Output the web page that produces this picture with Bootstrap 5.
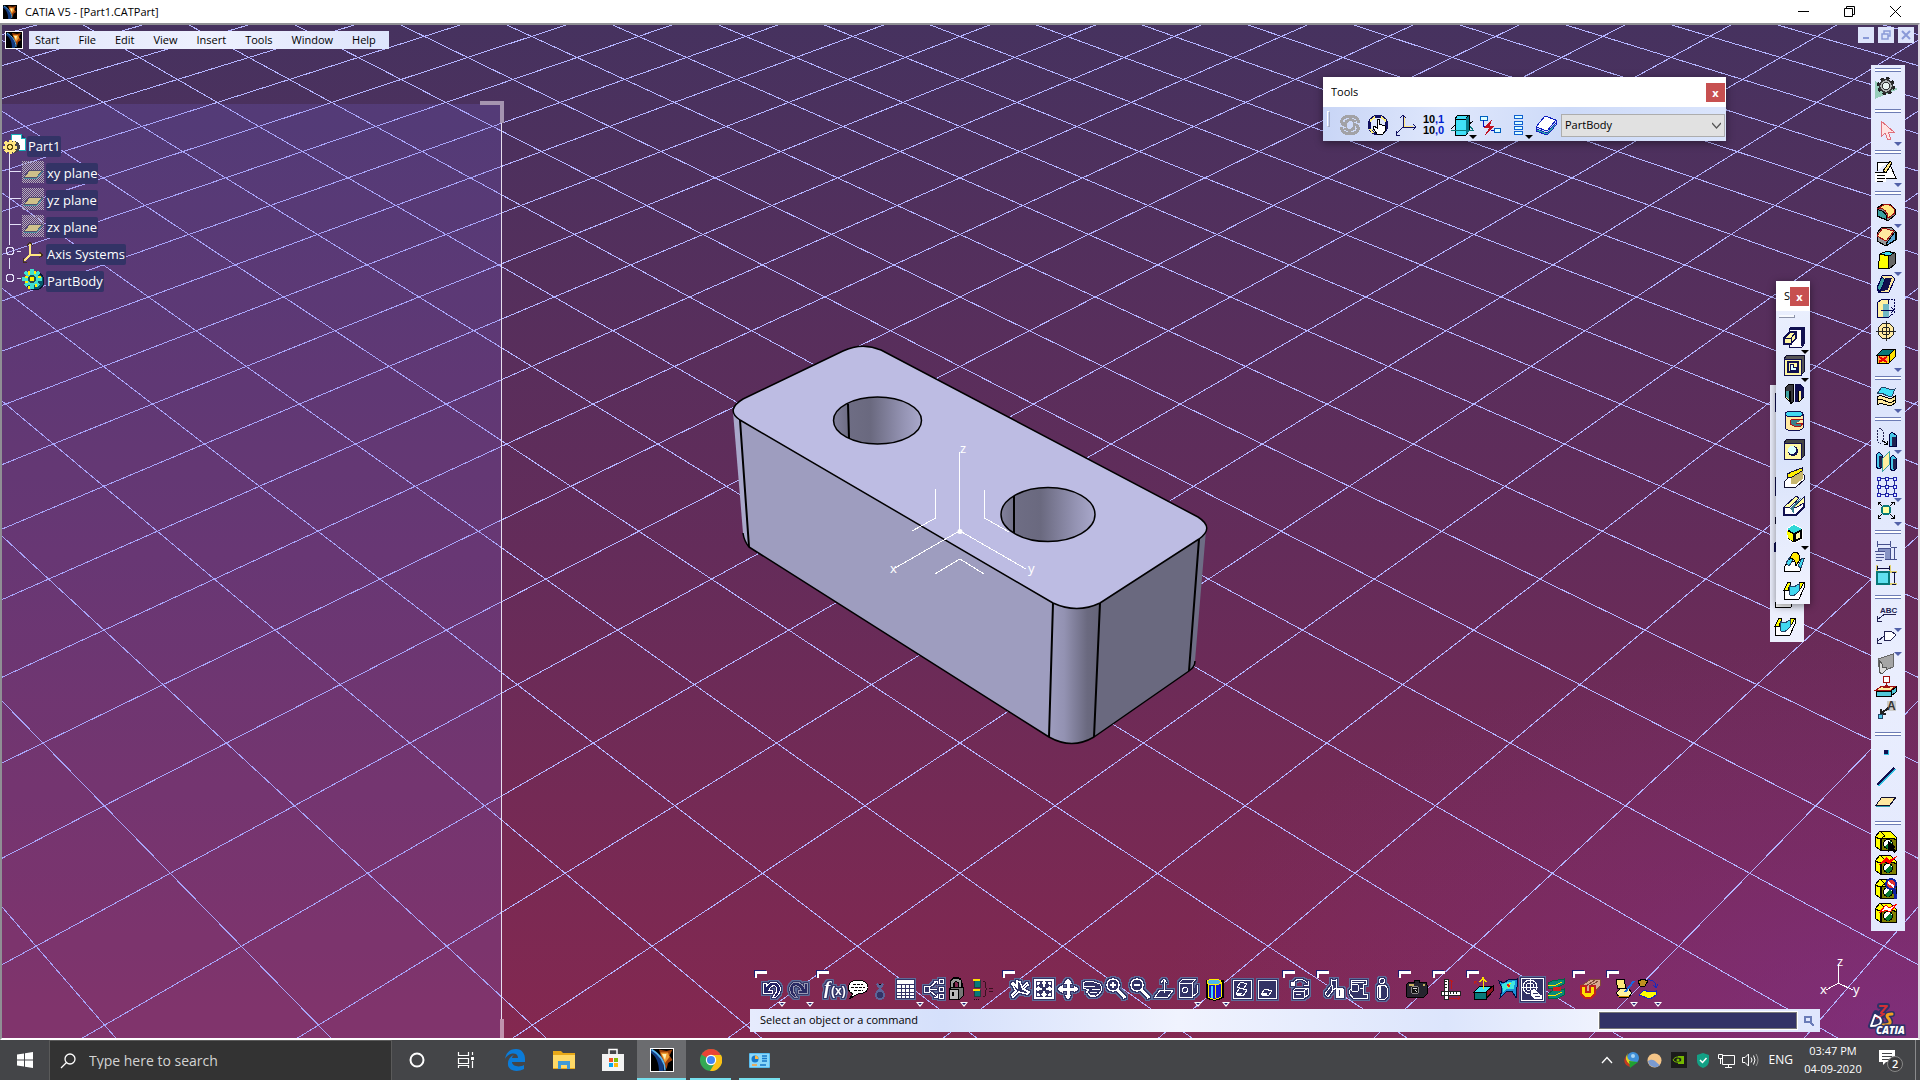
<!DOCTYPE html>
<html lang="en">
<head>
<meta charset="utf-8">
<meta name="viewport" content="width=device-width, initial-scale=1">
<title>CATIA V5 - [Part1.CATPart]</title>
<link href="https://cdn.jsdelivr.net/npm/bootstrap@5.3.0/dist/css/bootstrap.min.css" rel="stylesheet">
<style>
  :root { --pale: #e6ebfd; --navy: #333366; }
  body { font-family: "Open Sans", "Noto Sans", sans-serif; font-size: 11px; line-height: 16px; color: #000; background: #fff; overflow: hidden; }
  svg { display: block; flex: none; }
  .ico { width: 24px; height: 24px; shape-rendering: crispEdges; }
  .tool { background: none; border: 0; padding: 0; display: flex; align-items: center; justify-content: center; position: relative; flex: none; }
  .titlebar { height: 23px; padding: 0 2px 0 3px; }
  .titlebar .tool { width: 46px; height: 22px; }
  .stage { background: linear-gradient(180deg, #46325f 0%, #642c5a 52%, #842850 100%); isolation: isolate; }
  .stage::after { content: ""; position: absolute; inset: 0; border: 2px solid #8f8f94; border-right-color: #dcd8e0; border-bottom-color: #fff; pointer-events: none; }
  .scene { position: absolute; inset: 0; width: 100%; height: 100%; z-index: -1; }
  .menurow { padding: 8px 6px 0; }
  .docicon { outline: 1px solid #fff; }
  .menustrip { background: linear-gradient(90deg, #e2e7fb, #eef1fe, #dde4fc); height: 18px; padding-left: 6px; margin-left: 7px; }
  .menustrip a { color: #000; text-decoration: none; margin-right: 19px; line-height: 18px; }
  .menustrip a:last-child { margin-right: 13px; }
  .specs { width: 502px; margin-top: 55px; background: rgba(122,100,220,.2); position: relative; border-right: 1px solid #e8e0ee; padding-top: 29px; }
  .specs::before { content: ""; position: absolute; right: -3px; top: -3px; width: 24px; height: 22px; border-top: 4px solid #a594b0; border-right: 4px solid #a594b0; }
  .specs::after { content: ""; position: absolute; right: -3px; bottom: 0; width: 4px; height: 21px; background: #c093ad; }
  .tree li { height: 27px; padding-left: 21px; display: flex; align-items: flex-start; }
  .tree li.top { padding-left: 2px; }
  .tree .chip { background: var(--navy); color: #fff; font-size: 13px; line-height: 21px; padding: 0 1px; border-radius: 2px; margin-top: 3px; white-space: nowrap; text-decoration: none; }
  .tree .ico { margin-right: 1px; }
  .tree-lines { position: absolute; left: 0; top: 29px; z-index: -1; }
  .mdi { position: absolute; right: 6px; top: 4px; gap: 4px; }
  .mdi .tool { width: 16px; height: 16px; background: #dde4fb; }
  .pal { position: absolute; background: var(--pale); box-shadow: 0 2px 8px rgba(0,0,0,.45); }
  .pal-head { background: #fff; height: 30px; padding: 0 1px 0 8px; }
  .pal-head span { min-width: 0; overflow: hidden; }
  .closer { width: 19px; height: 19px; background: #c75050; color: #fff; font-weight: 700; line-height: 11px; }
  .pal-tools { right: 194px; top: 54px; width: 403px; }
  .pal-body { height: 34px; padding: 2px 1px 0 13px; background: linear-gradient(100deg, #c8d5f6, #dfe7fc 30%, #cddaf8 60%, #dbe5fc); }
  .pal-body .tool { width: 28px; height: 28px; }
  .grip { width: 3px; height: 16px; border: 1px solid #a5adc4; border-left-color: #fff; border-top-color: #fff; position: absolute; left: 4px; top: 34px; }
  .bodysel { width: 164px; height: 23px; line-height: 16px; border: 1px solid #adadad; border-radius: 0; background-color: #e1e1e1; padding: 0 3px; appearance: none; color: #000; }
  .selwrap { position: relative; margin-left: 1px; }
  .selwrap svg { position: absolute; right: 4px; top: 8px; pointer-events: none; }
  .more::after { content: ""; position: absolute; right: -1px; bottom: 0; border: 4px solid transparent; border-top-color: #000; border-bottom: 0; }
  .pal-s { right: 110px; top: 258px; width: 34px; background: linear-gradient(180deg, #edf1fe, #d9e3fb 55%, #f1f3fe); }
  .pal-back { right: 116px; top: 362px; width: 34px; padding: 3px 0 2px; background: #eceffd; box-shadow: none; }
  .pal-s .tool:not(.closer), .pal-back .tool { width: 34px; height: 28px; padding-left: 2px; }
  .pal-back .tool { padding: 0 4px 0 0; }
  .pal-s .more::after { right: 1px; bottom: -2px; }
  .sgrip { height: 13px; padding: 4px 15px 0 3px; }
  .sgrip div { height: 3px; border-bottom: 1px solid #8c93aa; border-right: 1px solid #8c93aa; background: #f8faff; }
  .rail { position: absolute; right: 15px; top: 42px; width: 34px; background: linear-gradient(180deg, #e6ebfe, #dde5fc 40%, #eaeefe 70%, #e2e8fd); }
  .rail-group { padding: 3px 4px 5px 3px; }
  .rail-group::before { content: ""; display: block; height: 4px; margin: 0 0 5px 1px; border-top: 1px solid #6d7cb5; border-bottom: 1px solid #6d7cb5; background: #fff; }
  .rail .tool { width: 24px; height: 24px; }
  .rail .more::after { right: -4px; bottom: -4px; border-width: 4px; border-top-color: #5261a8; border-bottom: 0; z-index: 1; }
  .dock { position: absolute; left: 755px; bottom: 32px; height: 37px; }
  .dock-group { position: relative; padding: 5px 5px 0; height: 37px; }
  .dock-group::before { content: ""; position: absolute; left: 0; top: 0; width: 12px; height: 7px; border-top: 3px solid #fff; border-left: 2px solid #fff; box-shadow: -1px -1px 0 #1c1c70; }
  .dock .tool { width: 24px; height: 25px; }
  .dock .w20 { width: 20px; } .dock .w22 { width: 22px; } .dock .w28 { width: 28px; } .dock .w32 { width: 32px; }
  .dock .more::after { right: -2px; bottom: -6px; border: 4px solid transparent; border-top: 5px solid #fff; border-bottom: 0; }
  .dock .more::before { content: ""; position: absolute; right: 0; bottom: -4px; border: 2px solid transparent; border-top-color: #1c1c70; border-bottom: 0; z-index: 1; }
  .halo { filter: drop-shadow(1px 0 0 #333366) drop-shadow(-1px 0 0 #333366) drop-shadow(0 1px 0 #333366) drop-shadow(0 -1px 0 #333366) drop-shadow(1px 0 0 #5c6c98) drop-shadow(-1px 0 0 #5c6c98) drop-shadow(0 1px 0 #5c6c98) drop-shadow(0 -1px 0 #5c6c98); }
  .statusline { position: absolute; left: 750px; right: 100px; bottom: 8px; height: 23px; padding-left: 10px; background: linear-gradient(90deg, #e6ebfd, #d5e0fb 18%, #f0f3fe 40%, #dce5fc 65%, #f0f3fe 80%, #dfe6fd); }
  .statusline label { padding-bottom: 2px; }
  .powerin { width: 200px; height: 19px; background: var(--navy); border: 2px solid #777; border-radius: 0; outline: 1px solid #fff; outline-offset: -1px; color: #fff; padding: 0 3px; }
  .statusline .tool { width: 22px; height: 20px; }
  .taskbar { height: 40px; background: #444548; color: #fff; }
  .taskbar .tool { width: 49px; height: 40px; color: #fff; }
  .taskbar .tool.open::after { content: ""; position: absolute; left: 4px; right: 4px; bottom: 0; height: 2px; background: #76e0ee; }
  .taskbar .tool.active { background: #6b6c6f; }
  .taskbar .tool.active::after { left: 0; right: 0; }
  .findbox { width: 343px; height: 40px; background: #333; border: 1px solid #5a5a5a; border-bottom: 0; padding-left: 9px; }
  .findbox input { background: none; border: 0; color: #fff; font-size: 14px; width: 280px; padding: 0; outline: 0; }
  .findbox input::placeholder { color: #d4d4d4; opacity: 1; }
  .taskbar .tray { margin-left: auto; }
  .taskbar .tray .tool { width: 24px; }
  .lang { font-size: 12px; margin: 0 10px 0 6px; }
  .clock { width: 60px; text-align: center; line-height: 18px; }
  .taskbar .tray .notes { width: 26px; margin-right: 10px; }
  .deskpeek { width: 5px; border-left: 1px solid #8a8a8c; }
</style>
<script src="https://cdn.jsdelivr.net/npm/bootstrap@5.3.0/dist/js/bootstrap.bundle.min.js"></script>
</head>
<body class="d-flex flex-column vh-100">

<svg width="0" height="0" class="position-absolute" aria-hidden="true">
  <defs>
    <symbol id="logo" viewBox="0 0 16 16"><rect width="16" height="16" fill="#000"/><path d="M6 1L11 2L15 1L13 5L15 8L12 10L11 14L8 8Z" fill="#a04208"/><path d="M7 3L12 3L13 6L10 10Z" fill="#f09a30"/><path d="M8 4L11 4L10 8Z" fill="#fff0b0"/><path d="M1 1C6 4 10 9 9 16L6 16C6 10 4 5 0 3Z" fill="#123a80"/><path d="M1 1C6 4 10 9 10 15" fill="none" stroke="#58b4f0"/></symbol>
    <symbol id="partdoc" viewBox="0 0 24 24"><path d="M9 1H19L23 5V17H9Z" fill="#fff" stroke="#18b0b8"/><path d="M19 1V5H23" fill="#333366" stroke="#18b0b8"/><circle cx="12" cy="14" r="6" fill="#44444c"/><g transform="translate(8 14)"><path d="M0-7V7M-7 0H7M-5-5L5 5M-5 5L5-5" stroke="#ffe680" stroke-width="3"/><circle r="5" fill="#ffe680"/><circle r="2.500" fill="#ffe680" stroke="#5c4a10" stroke-width="1.500"/></g></symbol>
    <pattern id="mesh" width="2" height="2" patternUnits="userSpaceOnUse"><rect width="1" height="1" fill="#b5adb8"/><rect x="1" y="1" width="1" height="1" fill="#b5adb8"/></pattern>
    <symbol id="planeh" viewBox="0 0 24 24"><rect x="1" y="1" width="22" height="22" fill="url(#mesh)"/><path d="M9 10H22L16 17H3Z" fill="#cfc08a" stroke="#555070"/><path d="M3 18H16L22 11" fill="none" stroke="#4c8fa0"/></symbol>
    <symbol id="axisy" viewBox="0 0 24 24"><path d="M9 3V14H20M9 14L3 20" fill="none" stroke="#ffe680" stroke-width="2"/><path d="M6 5L9 1L12 5M18 11L22 14L18 17M2 17V21H6" fill="none" stroke="#44301c"/></symbol>
    <symbol id="bodygear" viewBox="0 0 24 24"><circle cx="14" cy="13" r="9" fill="#06586a" stroke="#041830"/><path d="M11 1V21M1 11H21M4 4L18 18M18 4L4 18" stroke="#3fe0d0" stroke-width="4"/><circle cx="11" cy="11" r="6.500" fill="#3fe0d0"/><path d="M8 3V7M14 3V6M4 9H7M4 14H7M8 18V21M15 16V19M17 9H20" stroke="#fff000" stroke-width="2"/><circle cx="11" cy="11" r="3" fill="#fff000" stroke="#205050" stroke-width="1.500"/></symbol>
    <symbol id="gear" viewBox="0 0 24 24"><path d="M1 4L24 12L1 22Z" fill="#97cdb9"/><circle cx="12" cy="9" r="7.500" fill="none" stroke="#222" stroke-width="3" stroke-dasharray="3.400 2.490"/><circle cx="12" cy="9" r="5" fill="#e8f2f0" stroke="#333" stroke-width="4"/><circle cx="12" cy="9" r="5" fill="none" stroke="#b0b4b4" stroke-width="1.500"/></symbol>
    <symbol id="ptr" viewBox="0 0 24 24"><path d="M7 3V19L11 15L14 22L17 21L14 14H20Z" fill="#ffe3e3" stroke="#e0707c"/></symbol>
    <symbol id="sketch" viewBox="0 0 24 24"><path d="M3 12V3H14M12 19H22L16 6L12 14" fill="#fff" stroke="#000"/><path d="M9 12L16 2L18 4L12 14Z" fill="#ffe680" stroke="#000"/><path d="M1 13H12V23H1Z" fill="#fff"/><path d="M1 13.500H12M3 16.500H11M3 19.500H11M3 22.500H9" stroke="#000"/></symbol>
    <symbol id="fillet" viewBox="0 0 24 24"><path d="M3 8L9 4H16L21 9V15L14 21L3 16Z" fill="#888" stroke="#000"/><path d="M3 10C7 9 13 13 13 20L3 16Z" fill="#3aa0a0" stroke="#000"/><path d="M5 8L11 4C17 4 21 8 21 13L14 18C14 12 10 8 5 8Z" fill="#ffe680" stroke="#a01010"/></symbol>
    <symbol id="chamfer" viewBox="0 0 24 24"><path d="M3 9L8 3L18 4L22 8V16L12 22L3 17Z" fill="#999" stroke="#000"/><path d="M12 20L21 8V16L12 22Z" fill="#5aa8d8" stroke="#000"/><path d="M3 12L9 4L20 7L12 17Z" fill="#ffe9a0" stroke="#a01010"/></symbol>
    <symbol id="draft" viewBox="0 0 24 24"><path d="M6 6L13 3L21 5V16L15 21L4 20Z" fill="#666" stroke="#000"/><path d="M6 6L13 3L20 5L15 8Z" fill="#40d8ee" stroke="#000"/><path d="M6 6L15 8L14 21L4 20Z" fill="#ffff00" stroke="#000"/></symbol>
    <symbol id="shell" viewBox="0 0 24 24"><path d="M8 4L17 3L21 7L15 20L5 21L3 16Z" fill="#ffe9a0" stroke="#000050"/><path d="M11 6L18 6L14 18L7 19Z" fill="#10104c"/><path d="M3 16L8 5L11 8L6 20Z" fill="#3aa0a0" stroke="#000050"/></symbol>
    <symbol id="thick" viewBox="0 0 24 24"><path d="M3 7L8 3H14V21H3Z" fill="#fff0a0" stroke="#000050"/><path d="M9 8V21M14 3L20 3V17L15 21" fill="none" stroke="#000050" stroke-dasharray="2 1"/><path d="M9 8H15V21H9Z" fill="#70b8c4"/><path d="M7 14H20M17 11L20 14L17 17" fill="none" stroke="#000050"/></symbol>
    <symbol id="target" viewBox="0 0 24 24"><circle cx="12" cy="11" r="8" fill="#ffeaa0" stroke="#222"/><circle cx="12" cy="11" r="4" fill="none" stroke="#222"/><path d="M12.500 1V21M2 11.500H22" stroke="#222"/></symbol>
    <symbol id="replace" viewBox="0 0 24 24"><path d="M3 11L9 5H21V13L15 19H3Z" fill="#ffe000" stroke="#000"/><path d="M3 11L9 5H21L15 11Z" fill="#087878" stroke="#000"/><path d="M4 12H14V18H4Z" fill="#ffb040"/><path d="M5 13L13 18M13 13L5 18" stroke="#e00" stroke-width="2"/><path d="M15 11V19" stroke="#000"/></symbol>
    <symbol id="surf" viewBox="0 0 24 24"><path d="M3 12C9 7 14 18 21 11V18C14 25 9 15 3 20Z" fill="#ffe9a0" stroke="#000"/><path d="M3 15C9 11 14 22 21 15" fill="none" stroke="#000"/><path d="M3 9L7 3C12 0 15 7 21 4L18 11C13 14 9 5 3 9Z" fill="#40e0f8" stroke="#246"/></symbol>
    <symbol id="trans" viewBox="0 0 24 24"><path d="M3 5L6 2L9 5V15L6 18L3 15Z" fill="none" stroke="#222250" stroke-dasharray="2 1"/><path d="M8 14L13 18M13 15V18H10" fill="none" stroke="#000"/><path d="M15 9L18 6L22 9V20H15Z" fill="#48c8e8" stroke="#000040"/><path d="M18 11H22V20H18Z" fill="#222250"/></symbol>
    <symbol id="mirror" viewBox="0 0 24 24"><path d="M2 5L5 2L8 5V17L5 19L2 17ZM16 8L19 5L22 8V19L19 21L16 19Z" fill="#48c8e8" stroke="#000040"/><path d="M5 6H8V17H5ZM19 9H22V19H19Z" fill="#222250"/><path d="M8 9L15 2V15L8 22Z" fill="#fff0a0" stroke="#3aa0a0"/></symbol>
    <symbol id="pattern" viewBox="0 0 24 24"><path d="M4.500 4.500H20.500V20.500H4.500ZM4.500 12.500H20.500M12.500 4.500V20.500" fill="none" stroke="#223090"/><path d="M3 3h3v3h-3zM11 3h3v3h-3zM19 3h3v3h-3zM3 11h3v3h-3zM11 11h3v3h-3zM19 11h3v3h-3zM3 19h3v3h-3zM11 19h3v3h-3zM19 19h3v3h-3z" fill="#e0f0ff" stroke="#2020b0"/></symbol>
    <symbol id="scale" viewBox="0 0 24 24"><circle cx="12" cy="12" r="4.500" fill="#ffffa0" stroke="#087878" stroke-width="2"/><path d="M8 8L4 4M16 8L20 4M8 16L4 20M16 16L20 20M4 7V4H7M17 4H20V7M4 17V20H7M20 17V20H17" fill="none" stroke="#000"/></symbol>
    <symbol id="cons1" viewBox="0 0 24 24"><path d="M3.500 2V8M16.500 2V8M3 5.500H16M17 8.500H23M17 20.500H23M20.500 8V20" stroke="#46508c"/><path d="M4 9H16V20H4Z" fill="#8794c4" stroke="#46508c"/><path d="M1 12H11V22H1Z" fill="#dce3fa"/><path d="M1 12.500H11M2 15.500H10M2 18.500H10M2 21.500H8" stroke="#46508c"/></symbol>
    <symbol id="cons2" viewBox="0 0 24 24"><path d="M16 9H23M16 21H23M3 2V8M16 2V8" stroke="#e0d070" stroke-width="2"/><path d="M4 5.500H15M20.500 10V20M3.500 3V7M15.500 3V7M18 9.500H22M18 21.500H22" stroke="#101040"/><path d="M3 9H15V21H3Z" fill="#60e0f0" stroke="#087878" stroke-width="1.500"/></symbol>
    <symbol id="flag" viewBox="0 0 24 24"><path d="M10 3H17L22 7L17 12H10Z" fill="#fff" stroke="#222250"/><path d="M10 8L3 14M3 10V15H8" fill="none" stroke="#222250"/></symbol>
    <symbol id="greyp" viewBox="0 0 24 24"><path d="M4 7L19 2V15L9 19L4 14Z" fill="#a5a5a5" stroke="#666"/><path d="M5 20V8L8 12V15H12V18L8 22Z" fill="#ddd" stroke="#555"/></symbol>
    <symbol id="datum" viewBox="0 0 24 24"><path d="M2 14L8 10H22L17 14Z" fill="#ffe9a0" stroke="#a01010"/><path d="M9 0H15V6H9ZM12 6V12" fill="#fff" stroke="#a01010"/><path d="M8 12H16L12 8Z" fill="#a01010"/><path d="M2 15H17V20H2ZM17 15L22 11V16L17 20Z" fill="#50c8d8" stroke="#000"/></symbol>
    <symbol id="pt" viewBox="0 0 24 24"><path d="M10 9H15V14H10Z" fill="#30c0e0"/><path d="M10 9H14V13H10Z" fill="#101050"/></symbol>
    <symbol id="ln" viewBox="0 0 24 24"><path d="M4 21L21 4" stroke="#30c0e0" stroke-width="2"/><path d="M3 20L20 3" stroke="#101050" stroke-width="1.500"/></symbol>
    <symbol id="pl" viewBox="0 0 24 24"><path d="M8 8H22L16 16H2Z" fill="#ffe9a0" stroke="#101030"/><path d="M2 17H16" stroke="#30a0b0"/></symbol>
    <symbol id="cat" viewBox="0 0 24 24"><path d="M1 7L6 1H16L22 7V20H6L1 16Z" fill="#ffff00" stroke="#000"/><path d="M6 1L11 6L6 9V20M1 7L6 9" fill="none" stroke="#000"/><path d="M8 8H19L22 10V20H7V11Z" fill="#808000" stroke="#000"/><circle cx="14" cy="14" r="4.500" fill="#fff" stroke="#000"/><path d="M11 17L17 10L18 15L14 19Z" fill="#087830"/></symbol>
    <symbol id="cat1" viewBox="0 0 24 24"><use href="#cat"/><path d="M14 11V22L17 19L20 23L22 21L19 18L22 17Z"/></symbol>
    <symbol id="cat2" viewBox="0 0 24 24"><use href="#cat"/><path d="M5 11L12 3L15 6L23 2L16 10L12 8Z" fill="#f00"/></symbol>
    <symbol id="cat3" viewBox="0 0 24 24"><use href="#cat"/><circle cx="17" cy="6" r="5" fill="#e03030" stroke="#1020a0" stroke-width="2"/><path d="M14 4L20 9" stroke="#fff" stroke-width="2"/><path d="M20 11L22 21" stroke="#1020a0" stroke-width="3"/></symbol>
    <symbol id="cat4" viewBox="0 0 24 24"><use href="#cat"/><path d="M5 11L12 3L15 6L23 2L16 10L12 8Z" fill="#fff" stroke="#f00"/></symbol>
    <symbol id="pad" viewBox="0 0 24 24"><path d="M7 3L9 1H22V18L20 21H7Z" fill="#fff" stroke="#101050"/><path d="M8 2H22V20H19V4H8Z" fill="#101050"/><path d="M2 12L8 6H14V12L9 18H2Z" fill="#fff7a0" stroke="#101050" stroke-width="1.500"/><path d="M2 12H9V18M9 12L14 6" fill="none" stroke="#101050"/></symbol>
    <symbol id="pocket" viewBox="0 0 24 24"><path d="M2 5L5 1H22V18L19 21H2Z" fill="#555" stroke="#101030"/><path d="M2 5H19V21H2Z" fill="#fff7a0" stroke="#101050"/><path d="M6 8H16V18H6Z" fill="#fff7a0" stroke="#101050" stroke-width="1.500"/><path d="M8 10H11V13H14V16H8Z" fill="#dff" stroke="#101050"/></symbol>
    <symbol id="shaft" viewBox="0 0 24 24"><path d="M3 6L7 2H11V20L8 22V9H3Z" fill="#38383c" stroke="#000"/><path d="M3 9H7V19L3 15ZM16 8H21V16L17 20Z" fill="#fff0a0" stroke="#000"/><path d="M13 2H18L22 6V14L19 17V9H16V20H13Z" fill="#101050"/><path d="M4 9H7V18L4 15Z" fill="#3aa0a0"/></symbol>
    <symbol id="groove" viewBox="0 0 24 24"><path d="M3 4V18C7 22 17 22 21 18V4Z" fill="#ffe9a0" stroke="#101050"/><ellipse cx="12" cy="4" rx="9" ry="3" fill="#40d8f0" stroke="#101050"/><path d="M21 9H12C7 9 7 15 12 16H19L21 13H14" fill="#3a8088" stroke="#b01010"/></symbol>
    <symbol id="hole" viewBox="0 0 24 24"><path d="M2 5L5 1H22V18L19 21H2Z" fill="#444" stroke="#101030"/><path d="M2 5H19V21H2Z" fill="#fff7a0" stroke="#101050"/><circle cx="11" cy="13" r="5" fill="#101050"/><circle cx="10" cy="12" r="4" fill="#dff"/></symbol>
    <symbol id="rib" viewBox="0 0 24 24"><path d="M2 16L5 13V8L20 2V8L22 9V14L14 21H2Z" fill="#fff" stroke="#101030"/><path d="M9 11L21 5V13L14 18H9Z" fill="#c8b870"/><path d="M5 9L9 6L20 2V5L10 11H5Z" fill="#fff000" stroke="#101030"/></symbol>
    <symbol id="slot" viewBox="0 0 24 24"><path d="M2 14L8 8H20L22 6V13L14 21H2Z" fill="#fff" stroke="#101050" stroke-width="2"/><path d="M2 13L14 2L17 4L8 13ZM12 13L22 3V9L15 13Z" fill="#ffffa0" stroke="#101050"/><path d="M8 14L19 4L12 14V20" fill="#3a8090"/></symbol>
    <symbol id="solid" viewBox="0 0 24 24"><path d="M5 7L12 2L20 7V17L12 21L5 17Z" fill="#000" stroke="#fff"/><path d="M5 7L12 3L20 7L12 11Z" fill="#30d8d8"/><path d="M5 9L11 12V19L6 16Z" fill="#ffff00"/><path d="M14 12L18 10V16L14 17Z" fill="#fff7a0"/></symbol>
    <symbol id="multi" viewBox="0 0 24 24"><path d="M2 18L6 11H12L22 9L18 21H2Z" fill="#fff" stroke="#000"/><path d="M4 13L8 7L12 8L7 16ZM16 16L20 8L22 9L19 18Z" fill="#40d8f0" stroke="#246"/><path d="M8 9C10 0 17 0 18 9L14 16C13 10 11 8 8 9Z" fill="#ffe800" stroke="#000"/></symbol>
    <symbol id="loft" viewBox="0 0 24 24"><path d="M2 12L6 5H9L6 12H14L18 4H22V10L17 21H2Z" fill="#fff" stroke="#000"/><path d="M2 12L6 4H9L6 12ZM15 11L18 4H22L19 10Z" fill="#ffff00" stroke="#000"/><path d="M7 7C10 10 13 9 17 6V13C13 18 10 19 7 16Z" fill="#40d8f0" stroke="#246"/></symbol>

    <symbol id="t-upd" viewBox="0 0 24 24"><path d="M21 10C20 2 8 1 4 7C3 10 5 13 9 12M3 14C4 22 16 23 20 17C21 14 19 11 15 12M17 9C14 5 7 7 8 11M7 15C10 19 17 17 16 13" fill="none" stroke="#a2a2a6" stroke-width="3"/></symbol>
    <symbol id="t-man" viewBox="0 0 24 24"><circle cx="12" cy="12" r="9" fill="#dfe7fc" stroke="#101060" stroke-width="3"/><path d="M4 8L9 4M15 4L20 8M4 16L7 20" stroke="#fff07a" stroke-width="2"/><path d="M11 21L7 15L8 13L11 15V6H13V11L19 13V18L17 21Z" fill="#fff" stroke="#000"/></symbol>
    <symbol id="t-axis" viewBox="0 0 24 24"><path d="M9.500 3V14.500H21M9 14L2 21" fill="none" stroke="#101060"/><path d="M10.500 4V13.500H19" fill="none" stroke="#ffe680"/><path d="M6 5L9 2L12 5M19 11L22 14L19 17M2 18V22H6" fill="none" stroke="#101060"/></symbol>
    <symbol id="t-box" viewBox="0 0 24 24"><path d="M5 6L8 2H19V18L16 22H5Z" fill="#40e0f8" stroke="#000"/><path d="M5 6H16V22M16 6L19 2M1 16L6 11M23 8L18 12" fill="none" stroke="#000"/><path d="M1 17H23L20 13" fill="none" stroke="#087878"/><path d="M16 6L19 2V18L16 22Z" fill="#087888"/></symbol>
    <symbol id="t-bolt" viewBox="0 0 24 24"><path d="M2 3H9V7H2ZM16 15H22V19H16Z" fill="#dff" stroke="#0060c0"/><path d="M5 7V13H9M13 17H16" fill="none" stroke="#0010c0"/><path d="M14 6L6 15H11L7 22L17 13H12Z" fill="#c01020"/></symbol>
    <symbol id="t-list" viewBox="0 0 24 24"><path d="M8.500 2.500H16.500V5.500H8.500ZM8.500 8.500H16.500V11.500H8.500ZM8.500 13.500H16.500V16.500H8.500ZM8.500 18.500H16.500V21.500H8.500Z" fill="#dff" stroke="#1060d0"/></symbol>
    <symbol id="t-layer" viewBox="0 0 24 24"><path d="M2 14L11 3L22 7L13 18Z" fill="#fff" stroke="#1020c0"/><path d="M2 14V18L13 22L22 12V7M2 16L13 20L22 10" fill="none" stroke="#1020c0"/><path d="M3 17L13 21L21 12" fill="none" stroke="#30b0a0"/></symbol>

    <symbol id="b-undo" viewBox="0 0 24 24"><path d="M3 6V16H12V13H9C11 8 16 7 17 12C17 15 16 16 13 20H16C20 17 21 14 20 10C18 4 11 3 6 10V6Z" fill="#222262" stroke="#fff"/></symbol>
    <symbol id="b-fit" viewBox="0 0 24 24"><path d="M3 3H21V21H3Z" fill="#333366" stroke="#fff" stroke-width="1.500"/><path d="M12 5V10M12 14V19M5 12H10M14 12H19M10 7L12 5L14 7M10 17L12 19L14 17M7 10L5 12L7 14M17 10L19 12L17 14M6 8V6H8M16 6H18V8M6 16V18H8M16 18H18V16" fill="none" stroke="#fff" stroke-width="1.500"/></symbol>
    <symbol id="b-pan" viewBox="0 0 24 24"><path d="M12 2L15 6H13V11H18V9L22 12L18 15V13H13V18H15L12 22L9 18H11V13H6V15L2 12L6 9V11H11V6H9Z" fill="#fff" stroke="#fff"/></symbol>
    <symbol id="b-fly" viewBox="0 0 24 24"><path d="M5 6L9 10L9 4L12 5L14 10L19 6L20 8L15 12L21 15L19 17L11 15L5 20L4 18L8 14L4 7Z" fill="#333366" stroke="#fff" stroke-width="1.500"/></symbol>
    <symbol id="b-rot" viewBox="0 0 24 24"><path d="M3 6C7 3 10 5 14 5L20 7C23 11 21 17 16 19H10L8 16L6 15L9 13L3 11Z" fill="#333366" stroke="#fff"/><path d="M4 9H15M12 12H20M10 15H17M9 18H15" fill="none" stroke="#fff"/></symbol>
    <symbol id="b-zin" viewBox="0 0 24 24"><circle cx="9" cy="8" r="6" fill="#333366" stroke="#fff" stroke-width="1.500"/><path d="M9 5V11M6 8H12" stroke="#fff" stroke-width="2"/><path d="M13 12L21 21" stroke="#fff" stroke-width="3"/></symbol>
    <symbol id="b-zout" viewBox="0 0 24 24"><circle cx="9" cy="8" r="6" fill="#333366" stroke="#fff" stroke-width="1.500"/><path d="M6 8H12" stroke="#fff" stroke-width="2"/><path d="M13 12L21 21" stroke="#fff" stroke-width="3"/></symbol>
    <symbol id="b-norm" viewBox="0 0 24 24"><path d="M3 20L8 13H21L16 20Z" fill="#333366" stroke="#fff"/><path d="M12.500 16V3M9 6L12 2L15 6" fill="none" stroke="#fff"/></symbol>
    <symbol id="b-iso" viewBox="0 0 24 24"><path d="M3 6H16V20H3ZM3 6L7 2H20L16 6M16 20L21 16V8" fill="#333366" stroke="#fff"/><circle cx="9" cy="13" r="2.500" fill="none" stroke="#fff"/></symbol>
    <symbol id="b-cyl" viewBox="0 0 24 24"><path d="M5 4V20C9 23 16 23 20 20V4Z" fill="#1818c8" stroke="#000" stroke-width="3"/><path d="M6 5V20C9 23 16 23 19 20V5Z" fill="#1818c8" stroke="#fff000"/><ellipse cx="12" cy="5" rx="7" ry="3" fill="#50b8e8" stroke="#fff000"/><path d="M10 9V21" stroke="#40d8ff" stroke-width="2"/><path d="M13.500 8V21" stroke="#fff000"/></symbol>
    <symbol id="b-hide" viewBox="0 0 24 24"><path d="M3 3H21V21H3Z" fill="#333366" stroke="#fff"/><path d="M7 10L11 5L17 7L13 12ZM6 16L10 11L17 13L13 19L7 18Z" fill="#333366" stroke="#fff"/><path d="M6 16H12L11 19L7 18Z" fill="#fff"/></symbol>
    <symbol id="b-swap" viewBox="0 0 24 24"><path d="M3 3H21V21H3Z" fill="#333366" stroke="#fff"/><path d="M6 17L10 12L17 14L13 19L7 18Z" fill="#333366" stroke="#fff"/><path d="M6 16H12L12 19L7 18Z" fill="#fff"/></symbol>
    <symbol id="b-table" viewBox="0 0 24 24"><path d="M3 3H20V21H3Z" fill="#fff"/><path d="M3 7.500H20M3 11.500H20M3 15.500H20M3 18.500H20M7.500 7V21M11.500 7V21M15.500 7V21" stroke="#333366"/></symbol>
    <symbol id="b-tree" viewBox="0 0 24 24"><path d="M2 9H7V15H2ZM17 2H21V6H17ZM17 10H21V14H17ZM17 17H21V21H17ZM7 12H15M7 11L15 4M7 13L15 20M12 4H15V7M12 20H15V17" fill="#333366" stroke="#fff"/></symbol>
    <symbol id="b-lock" viewBox="0 0 24 24"><path d="M8 11V6C9 1 16 1 16 6V11" fill="none" stroke="#000" stroke-width="5"/><path d="M8 11V6C9 2 16 2 16 6V11" fill="none" stroke="#999" stroke-width="2.500"/><path d="M5 12L8 10H19V19L16 22H5Z" fill="#777" stroke="#000"/><path d="M5 12H14V22H5Z" fill="#bbb" stroke="#000"/><path d="M9 15V19" stroke="#000" stroke-width="2"/></symbol>
    <symbol id="b-rel" viewBox="0 0 24 24"><path d="M4 3H10V10H4ZM4 13H10V19H4Z" fill="#087878" stroke="#204040"/><path d="M3 3H10M3 13H10" stroke="#ffe000" stroke-width="2"/><path d="M4 22H10" stroke="#200010" stroke-dasharray="1 1"/><path d="M13 4Q16 4 15 8Q15 11 17 12Q15 13 15 16Q16 20 13 20M19 11H23M19 14H23" fill="none" stroke="#3a1020"/></symbol>
    <symbol id="b-bub" viewBox="0 0 24 24"><path d="M3 22L7 17C-1 13 2 3 12 3C25 3 26 17 12 17Z" fill="#fff" stroke="#000"/><path d="M7 7.500H17M5 10.500H19M8 13.500H17" stroke="#000" stroke-dasharray="3 1"/></symbol>
    <symbol id="b-dim" viewBox="0 0 24 24"><circle cx="12" cy="18" r="4" fill="#333366" stroke="#5c6498" stroke-width="2"/><path d="M10 9L14 14M14 9L10 14M9 7L12 10L15 7" stroke="#5c6498" stroke-width="2"/></symbol>
    <symbol id="b-turn" viewBox="0 0 24 24"><path d="M6 6C8 1 15 1 19 6M16 8H20V4" fill="none" stroke="#fff"/><circle cx="5" cy="7" r="2.500" fill="#fff"/><path d="M5 14L8 11H20V18L16 21H5ZM5 14H16V21M16 14L20 11M8 17H13" fill="#333366" stroke="#fff"/></symbol>
    <symbol id="b-meas" viewBox="0 0 24 24"><path d="M9 2V9L3 17L6 20L11 13M14 2V10" fill="#333366" stroke="#fff"/><path d="M9 3H14V11L11 13Z" fill="#333366" stroke="#fff"/><path d="M14 12L16 11H19L21 12V20H14Z" fill="#fff" stroke="#fff"/><path d="M17.500 13V19" stroke="#333366"/></symbol>
    <symbol id="b-cal" viewBox="0 0 24 24"><path d="M5 3H20V7H17V17H21V21H7L4 17L3 14L5 12Z" fill="#333366" stroke="#fff"/><circle cx="9" cy="11" r="4" fill="#333366" stroke="#fff"/><path d="M5 5H18M17 11H14" stroke="#fff"/></symbol>
    <symbol id="b-wt" viewBox="0 0 24 24"><circle cx="12" cy="4" r="2.500" fill="#333366" stroke="#fff"/><path d="M9 8H15L17 11V20L15 22H9L7 20V11Z" fill="#333366" stroke="#fff"/><path d="M10 9V21" stroke="#fff" stroke-width="2"/></symbol>
    <symbol id="b-cam" viewBox="0 0 24 24"><path d="M2 8L5 5H10V3H15V5H22L23 8V17L20 20H3Z" fill="#26242e" stroke="#000"/><circle cx="11" cy="13" r="4" fill="#111" stroke="#888"/><path d="M9 11H13M11 13L13 15" stroke="#ddd"/><path d="M5 8H10M19 8H21" stroke="#c8b060" stroke-width="2"/></symbol>
    <symbol id="b-ruler" viewBox="0 0 24 24"><path d="M6 2H10V22H6ZM3 14H22V18H3Z" fill="#fff" stroke="#222"/><path d="M13.500 3V12M11 5L13 3L15 5M11 21.500H22M20 19L22 21L20 23" fill="none" stroke="#c01818"/><path d="M7 4.500H9M7 7.500H9M7 10.500H9M12.500 15V17M15.500 15V17M18.500 15V17" stroke="#222"/></symbol>
    <symbol id="b-draft" viewBox="0 0 24 24"><path d="M2 15L8 9H21L16 15Z" fill="#40e0f0" stroke="#000"/><path d="M2 15H14V22H2Z" fill="#087878" stroke="#000"/><path d="M14 15L21 9V14L14 22Z" fill="#8c1020" stroke="#000"/><path d="M11.500 12V2M8 5L11 1L14 5" fill="none" stroke="#ffe000" stroke-width="1.500"/><path d="M2 7V4H5M2 4L7 9" fill="none" stroke="#c02020"/></symbol>
    <symbol id="b-curv" viewBox="0 0 24 24"><path d="M3 4L8 6L12 3L21 2V10L20 21L16 14L10 15L4 21L6 12Z" fill="#1890d8" stroke="#001040"/><path d="M6 7L12 5L19 4L18 12L11 12L7 15Z" fill="#40e8e0"/><path d="M11 7L15 6L12 12Z" fill="#fff000"/><path d="M12 7L13 10" stroke="#e02020" stroke-width="2"/></symbol>
    <symbol id="b-tap" viewBox="0 0 24 24"><path d="M1 1H23V23H1Z" fill="#333366" stroke="#fff"/><circle cx="10" cy="10" r="7" fill="none" stroke="#fff"/><circle cx="10" cy="10" r="4" fill="none" stroke="#fff"/><path d="M10.500 2V18M2 10.500H18" stroke="#fff"/><path d="M10 14L14 11L18 15L22 18V22H14L10 18Z" fill="#fff" stroke="#333366"/><path d="M13 16.500H18M15 19.500H20" stroke="#333366"/></symbol>
    <symbol id="b-sect" viewBox="0 0 24 24"><path d="M4 6L8 4L20 2V7L14 10V13L20 12V18L14 21H4V17L8 14V11H4Z" fill="#088878" stroke="#064"/><path d="M4 8H12L18 5M4 18H12L18 15" stroke="#ffe000" fill="none"/><path d="M9 10H17V14H9Z" fill="#d02020"/></symbol>
    <symbol id="b-chan" viewBox="0 0 24 24"><path d="M3 9L13 2H22V9L16 16H8Z" fill="#d8a890" stroke="#804838"/><path d="M8 9L17 3M12 9L20 4" stroke="#804838"/><path d="M3 9H8V15H12V9H17V17L13 21H7L3 17Z" fill="#ffe000" stroke="#c02020" stroke-width="1.500"/></symbol>
    <symbol id="b-cata" viewBox="0 0 24 24"><path d="M4 3L12 2L14 11H8L6 12Z" fill="#ffe97a" stroke="#000"/><path d="M8 12L16 11L20 16L17 20H7L4 16Z" fill="#fff3a0" stroke="#000"/><path d="M6 19H17" stroke="#d09000"/><path d="M22 4L13 15" stroke="#1868e0" stroke-width="2"/></symbol>
    <symbol id="b-paste" viewBox="0 0 24 24"><path d="M2 4L7 2L12 4L9 9H4Z" fill="#c09020" stroke="#000"/><path d="M3 18L8 13L13 15L20 14L20 18L14 22Z" fill="#ffff00" stroke="#1828c0"/><path d="M12 3C17 2 20 6 20 10M17 8L20 11L22 7" fill="none" stroke="#1828c0"/></symbol>
    <linearGradient id="corner" x1="0" x2="1"><stop offset="0" stop-color="#9e9dbf"/><stop offset=".3" stop-color="#9392b2"/><stop offset=".75" stop-color="#6a697f"/><stop offset="1" stop-color="#656479"/></linearGradient>
    <linearGradient id="bore" x1="0" x2="1"><stop offset="0" stop-color="#82819c"/><stop offset=".17" stop-color="#6e6d84"/><stop offset=".42" stop-color="#6a697f"/><stop offset=".8" stop-color="#9594b4"/><stop offset="1" stop-color="#a9a8cb"/></linearGradient>
    <radialGradient id="glow" cx="1" cy="1" r=".4"><stop offset="0" stop-color="#7c3398" stop-opacity=".6"/><stop offset=".5" stop-color="#7c3398" stop-opacity=".25"/><stop offset="1" stop-color="#7c3398" stop-opacity="0"/></radialGradient>
  </defs>
</svg>

<header class="titlebar d-flex align-items-center bg-white">
  <svg width="14" height="14"><use href="#logo"/></svg>
  <span class="ms-1 me-auto ps-1">CATIA V5 - [Part1.CATPart]</span>
  <button class="tool" aria-label="Minimize"><svg width="11" height="11"><path d="M0 5.500H11" stroke="#000"/></svg></button>
  <button class="tool" aria-label="Restore"><svg width="11" height="11"><path d="M.5 2.500H8.500V10.500H.5ZM2.500 2.500V.5H10.500V8.500H8.500" fill="none" stroke="#000"/></svg></button>
  <button class="tool" aria-label="Close"><svg width="11" height="11"><path d="M0 0L11 11M11 0L0 11" stroke="#000"/></svg></button>
</header>

<main class="stage position-relative flex-grow-1 d-flex flex-column">
  <svg class="scene" viewBox="0 23 1920 1017" preserveAspectRatio="xMidYMid slice" role="img" aria-label="3D part">
    <rect y="23" width="1920" height="1017" fill="url(#glow)"/>
    <g id="floor" stroke="#b4b4ff" stroke-width="1" shape-rendering="crispEdges"></g>
    <g stroke-linejoin="round">
      <path d="M733 412L743 533Q744 541 749 547L756 440Z" fill="#a9a8cb"/>
      <path d="M1206 530L1195 661Q1195 667 1189 671L1180 560Z" fill="#6e6d85"/>
      <path d="M740 420L1053 603L1049 737L749 547Z" fill="#9e9dbf"/>
      <path d="M1100 603L1199 539L1189 671L1094 737Z" fill="#6a697f"/>
      <path d="M1053 603Q1077 615 1100 603L1094 737Q1072 750 1049 737Z" fill="url(#corner)"/>
      <path d="M743 399L843 351Q862 342 881 350L1198 517Q1215 528 1199 539L1100 603Q1077 614 1053 603L740 420Q725 410 743 399Z" fill="#bdbce3" stroke="#000" stroke-width="1.500"/>
      <path d="M740 420L749 547M1053 603L1049 737M1100 603L1094 737M1199 539L1189 671" fill="none" stroke="#000" stroke-width="2"/>
      <path d="M743 533Q744 541 749 547L1049 737Q1072 750 1094 737L1189 671Q1195 667 1195 661" fill="none" stroke="#000" stroke-width="1.500"/>
      <ellipse cx="877.500" cy="420.500" rx="44" ry="23.500" fill="url(#bore)" stroke="#000" stroke-width="1.500"/>
      <ellipse cx="1048" cy="514.500" rx="47" ry="27" fill="url(#bore)" stroke="#000" stroke-width="1.500"/>
      <path d="M848 404L849 438M1014 496V533" stroke="#000" stroke-width="2"/>
    </g>
    <g fill="none" stroke="#fff" shape-rendering="crispEdges">
      <path d="M959.500 452V531L895 568M960 531L1026 569M935.500 489V518L912 531M984.500 490V518L1009 532M935 574L960 559L984 574"/>
      <path d="M1838.500 964V983L1826 990M1838 983L1853 990"/>
    </g>
    <circle cx="960" cy="531.500" r="2.500" fill="#fff"/>
    <g fill="#fff" font-family="Noto Sans, sans-serif" font-size="13">
      <text x="960" y="453">z</text><text x="890" y="573">x</text><text x="1028" y="573">y</text>
      <text x="1837" y="966">z</text><text x="1820" y="994">x</text><text x="1853" y="994">y</text>
    </g>
    <g fill="none" stroke-linecap="round" stroke-linejoin="round">
      <path d="M1880 1006L1887 1006L1881 1013L1884 1014L1877 1019M1876 1013L1871 1026Q1884 1026 1880 1018L1875 1015M1892 1014Q1884 1014 1889 1019Q1893 1025 1882 1025" stroke="#2d3268" stroke-width="6"/>
      <path d="M1880 1006L1887 1006L1881 1013L1884 1014L1877 1018" stroke="#d03038" stroke-width="2"/>
      <path d="M1875 1015L1871 1026Q1884 1026 1880 1018L1875 1015" stroke="#fff" stroke-width="2"/>
      <path d="M1892 1014Q1884 1014 1889 1019Q1893 1025 1883 1025" stroke="#f0a020" stroke-width="3"/>
    </g>
    <text x="1876" y="1034" font-family="Open Sans, sans-serif" font-size="10" font-weight="800" font-style="italic" fill="#fff" stroke="#2d3268" stroke-width="3" paint-order="stroke">CATIA</text>
  </svg>

  <nav class="menurow d-flex align-items-center">
    <svg width="16" height="16" class="docicon"><use href="#logo"/></svg>
    <div class="menustrip d-flex">
      <a href="#">Start</a><a href="#">File</a><a href="#">Edit</a><a href="#">View</a><a href="#">Insert</a><a href="#">Tools</a><a href="#">Window</a><a href="#">Help</a>
    </div>
    <div class="mdi d-flex">
      <button class="tool" aria-label="Minimize document"><svg width="10" height="10"><path d="M2 8H8" stroke="#8a9ad8" stroke-width="2"/></svg></button>
      <button class="tool" aria-label="Restore document"><svg width="10" height="10"><path d="M1 4H7V9H1ZM3 4V1H9V6H7" fill="none" stroke="#8a9ad8" stroke-width="1.500"/></svg></button>
      <button class="tool" aria-label="Close document"><svg width="10" height="10"><path d="M1 1L9 9M9 1L1 9" stroke="#8a9ad8" stroke-width="2"/></svg></button>
    </div>
  </nav>

  <aside class="specs flex-grow-1">
    <svg class="tree-lines" width="30" height="160" shape-rendering="crispEdges"><path d="M9.500 20V112M9.500 125V136M9.500 38.500H21M9.500 65.500H21M9.500 91.500H21M17 118.500H21M17 145.500H21" stroke="#fff" fill="none"/><path d="M8 114.500H12L13.500 116V120L12 121.500H8L6.500 120V116ZM8 141.500H12L13.500 143V147L12 148.500H8L6.500 147V143Z" fill="none" stroke="#fff"/></svg>
    <ul class="tree list-unstyled m-0">
      <li class="top"><svg class="ico"><use href="#partdoc"/></svg><a class="chip" href="#">Part1</a></li>
      <li><svg class="ico"><use href="#planeh"/></svg><a class="chip" href="#">xy plane</a></li>
      <li><svg class="ico"><use href="#planeh"/></svg><a class="chip" href="#">yz plane</a></li>
      <li><svg class="ico"><use href="#planeh"/></svg><a class="chip" href="#">zx plane</a></li>
      <li><svg class="ico"><use href="#axisy"/></svg><a class="chip" href="#">Axis Systems</a></li>
      <li><svg class="ico"><use href="#bodygear"/></svg><a class="chip" href="#">PartBody</a></li>
    </ul>
  </aside>

  <section class="pal pal-tools">
    <div class="pal-head d-flex align-items-center justify-content-between"><span>Tools</span><button class="tool closer" aria-label="Close Tools">x</button></div>
    <span class="grip"></span>
    <div class="pal-body d-flex align-items-center">
      <button class="tool" aria-label="Update"><svg class="ico"><use href="#t-upd"/></svg></button>
      <button class="tool" aria-label="Manual update"><svg class="ico"><use href="#t-man"/></svg></button>
      <button class="tool" aria-label="Axis system"><svg class="ico"><use href="#t-axis"/></svg></button>
      <button class="tool" aria-label="Mean dimensions"><svg class="ico" viewBox="0 0 24 24"><g font-family="Liberation Sans, sans-serif" font-size="11" font-weight="700"><text x="1" y="10">10</text><text x="13" y="10" fill="#0020d0">,1</text><text x="1" y="21">10</text><text x="13" y="21" fill="#0020d0">,0</text></g></svg></button>
      <button class="tool more" aria-label="Only current body"><svg class="ico"><use href="#t-box"/></svg></button>
      <button class="tool" aria-label="Catalog"><svg class="ico"><use href="#t-bolt"/></svg></button>
      <button class="tool more" aria-label="Structure"><svg class="ico"><use href="#t-list"/></svg></button>
      <button class="tool" aria-label="Layers"><svg class="ico"><use href="#t-layer"/></svg></button>
      <div class="selwrap"><select class="bodysel" aria-label="In work object"><option>PartBody</option></select><svg width="9" height="8"><path d="M0 1L4.500 6L9 1" fill="none" stroke="#555" stroke-width="1.200"/></svg></div>
    </div>
  </section>

  <section class="pal pal-back" aria-hidden="true">
    <button class="tool"><svg class="ico"><use href="#pocket"/></svg></button><button class="tool"><svg class="ico"><use href="#shaft"/></svg></button><button class="tool"><svg class="ico"><use href="#groove"/></svg></button><button class="tool"><svg class="ico"><use href="#hole"/></svg></button><button class="tool"><svg class="ico"><use href="#rib"/></svg></button><button class="tool"><svg class="ico"><use href="#slot"/></svg></button><button class="tool"><svg class="ico"><use href="#solid"/></svg></button><button class="tool"><svg class="ico"><use href="#multi"/></svg></button><button class="tool"><svg class="ico"><use href="#loft"/></svg></button>
  </section>

  <section class="pal pal-s">
    <div class="pal-head d-flex align-items-center justify-content-between overflow-hidden"><span>S</span><button class="tool closer" aria-label="Close">x</button></div>
    <div class="sgrip"><div></div></div>
    <button class="tool more" aria-label="Pad"><svg class="ico"><use href="#pad"/></svg></button>
    <button class="tool more" aria-label="Pocket"><svg class="ico"><use href="#pocket"/></svg></button>
    <button class="tool" aria-label="Shaft"><svg class="ico"><use href="#shaft"/></svg></button>
    <button class="tool" aria-label="Groove"><svg class="ico"><use href="#groove"/></svg></button>
    <button class="tool" aria-label="Hole"><svg class="ico"><use href="#hole"/></svg></button>
    <button class="tool" aria-label="Rib"><svg class="ico"><use href="#rib"/></svg></button>
    <button class="tool" aria-label="Slot"><svg class="ico"><use href="#slot"/></svg></button>
    <button class="tool more" aria-label="Solid combine"><svg class="ico"><use href="#solid"/></svg></button>
    <button class="tool" aria-label="Multi-sections solid"><svg class="ico"><use href="#multi"/></svg></button>
    <button class="tool" aria-label="Removed multi-sections solid"><svg class="ico"><use href="#loft"/></svg></button>
  </section>

  <section class="rail">
    <div class="rail-group"><button class="tool" aria-label="Part Design"><svg class="ico"><use href="#gear"/></svg></button></div>
    <div class="rail-group"><button class="tool more" aria-label="Select"><svg class="ico"><use href="#ptr"/></svg></button></div>
    <div class="rail-group"><button class="tool more" aria-label="Sketch"><svg class="ico"><use href="#sketch"/></svg></button></div>
    <div class="rail-group">
      <button class="tool more" aria-label="Edge fillet"><svg class="ico"><use href="#fillet"/></svg></button>
      <button class="tool" aria-label="Chamfer"><svg class="ico"><use href="#chamfer"/></svg></button>
      <button class="tool more" aria-label="Draft angle"><svg class="ico"><use href="#draft"/></svg></button>
      <button class="tool" aria-label="Shell"><svg class="ico"><use href="#shell"/></svg></button>
      <button class="tool" aria-label="Thickness"><svg class="ico"><use href="#thick"/></svg></button>
      <button class="tool" aria-label="Thread"><svg class="ico"><use href="#target"/></svg></button>
      <button class="tool more" aria-label="Remove face"><svg class="ico"><use href="#replace"/></svg></button>
    </div>
    <div class="rail-group"><button class="tool more" aria-label="Thick surface"><svg class="ico"><use href="#surf"/></svg></button></div>
    <div class="rail-group">
      <button class="tool more" aria-label="Translation"><svg class="ico"><use href="#trans"/></svg></button>
      <button class="tool" aria-label="Mirror"><svg class="ico"><use href="#mirror"/></svg></button>
      <button class="tool more" aria-label="Rectangular pattern"><svg class="ico"><use href="#pattern"/></svg></button>
      <button class="tool more" aria-label="Scaling"><svg class="ico"><use href="#scale"/></svg></button>
    </div>
    <div class="rail-group">
      <button class="tool" aria-label="Constraints in dialog"><svg class="ico"><use href="#cons1"/></svg></button>
      <button class="tool" aria-label="Constraint"><svg class="ico"><use href="#cons2"/></svg></button>
    </div>
    <div class="rail-group">
      <button class="tool more" aria-label="Text with leader"><svg class="ico" viewBox="0 0 24 24"><text x="6" y="9" font-family="Liberation Sans, sans-serif" font-size="8" font-weight="700" fill="#222250">ABC</text><path d="M22 10.500H10L3 16M3 12V17H8" fill="none" stroke="#222250"/></svg></button>
      <button class="tool more" aria-label="Flag note"><svg class="ico"><use href="#flag"/></svg></button>
      <button class="tool" aria-label="View"><svg class="ico"><use href="#greyp"/></svg></button>
      <button class="tool" aria-label="Datum"><svg class="ico"><use href="#datum"/></svg></button>
      <button class="tool" aria-label="Annotation"><svg class="ico" viewBox="0 0 24 24"><rect x="13" y="1" width="9" height="10" fill="#ccc"/><text x="13" y="10" font-family="Liberation Sans, sans-serif" font-size="12" font-weight="700" fill="#333">A</text><path d="M14 8L8 13M7 9V14H12" stroke="#222" stroke-width="2" fill="none"/><path d="M4 14H8V18H4Z" fill="#50c8e8" stroke="#246"/></svg></button>
    </div>
    <div class="rail-group">
      <button class="tool" aria-label="Point"><svg class="ico"><use href="#pt"/></svg></button>
      <button class="tool" aria-label="Line"><svg class="ico"><use href="#ln"/></svg></button>
      <button class="tool" aria-label="Plane"><svg class="ico"><use href="#pl"/></svg></button>
    </div>
    <div class="rail-group">
      <button class="tool" aria-label="Select catalog"><svg class="ico"><use href="#cat1"/></svg></button>
      <button class="tool" aria-label="PowerCopy"><svg class="ico"><use href="#cat2"/></svg></button>
      <button class="tool" aria-label="User feature"><svg class="ico"><use href="#cat3"/></svg></button>
      <button class="tool" aria-label="Instantiate"><svg class="ico"><use href="#cat4"/></svg></button>
    </div>
  </section>

  <section class="dock d-flex">
    <div class="dock-group d-flex">
      <button class="tool more" aria-label="Undo"><svg class="ico halo"><use href="#b-undo"/></svg></button>
      <button class="tool more w28" aria-label="Redo"><svg class="ico halo" viewBox="0 0 24 24"><g opacity=".5" transform="translate(24 0) scale(-1 1)"><use href="#b-undo" width="24" height="24"/></g></svg></button>
    </div>
    <div class="dock-group d-flex">
      <button class="tool" aria-label="Formula"><svg class="ico halo" viewBox="0 0 24 24"><text x="2" y="17" font-family="Liberation Serif, serif" font-size="19" font-style="italic" font-weight="700" fill="#fff">f</text><text x="9" y="18" font-family="Liberation Sans, sans-serif" font-size="12" font-weight="700" fill="#fff">(x)</text></svg></button>
      <button class="tool" aria-label="Comment"><svg class="ico"><use href="#b-bub"/></svg></button>
      <button class="tool w20" aria-label="Check"><svg class="ico"><use href="#b-dim"/></svg></button>
      <button class="tool more w32" aria-label="Design table"><svg class="ico halo"><use href="#b-table"/></svg></button>
      <button class="tool" aria-label="Knowledge"><svg class="ico halo"><use href="#b-tree"/></svg></button>
      <button class="tool more w20" aria-label="Lock"><svg class="ico"><use href="#b-lock"/></svg></button>
      <button class="tool w32" aria-label="Equivalent dimensions"><svg class="ico"><use href="#b-rel"/></svg></button>
    </div>
    <div class="dock-group d-flex">
      <button class="tool" aria-label="Fly mode"><svg class="ico halo"><use href="#b-fly"/></svg></button>
      <button class="tool" aria-label="Fit all in"><svg class="ico halo"><use href="#b-fit"/></svg></button>
      <button class="tool" aria-label="Pan"><svg class="ico halo"><use href="#b-pan"/></svg></button>
      <button class="tool" aria-label="Rotate"><svg class="ico halo"><use href="#b-rot"/></svg></button>
      <button class="tool" aria-label="Zoom in"><svg class="ico halo"><use href="#b-zin"/></svg></button>
      <button class="tool" aria-label="Zoom out"><svg class="ico halo"><use href="#b-zout"/></svg></button>
      <button class="tool" aria-label="Normal view"><svg class="ico halo"><use href="#b-norm"/></svg></button>
      <button class="tool more" aria-label="Isometric view"><svg class="ico halo"><use href="#b-iso"/></svg></button>
      <button class="tool more w28" aria-label="Shading"><svg class="ico"><use href="#b-cyl"/></svg></button>
      <button class="tool w28" aria-label="Hide/Show"><svg class="ico halo"><use href="#b-hide"/></svg></button>
      <button class="tool w22" aria-label="Swap visible space"><svg class="ico halo"><use href="#b-swap"/></svg></button>
    </div>
    <div class="dock-group d-flex"><button class="tool" aria-label="Turn"><svg class="ico halo"><use href="#b-turn"/></svg></button></div>
    <div class="dock-group d-flex">
      <button class="tool" aria-label="Measure between"><svg class="ico halo"><use href="#b-meas"/></svg></button>
      <button class="tool" aria-label="Measure item"><svg class="ico halo"><use href="#b-cal"/></svg></button>
      <button class="tool" aria-label="Measure inertia"><svg class="ico halo"><use href="#b-wt"/></svg></button>
    </div>
    <div class="dock-group d-flex"><button class="tool" aria-label="Capture"><svg class="ico"><use href="#b-cam"/></svg></button></div>
    <div class="dock-group d-flex"><button class="tool" aria-label="Dimensions"><svg class="ico"><use href="#b-ruler"/></svg></button></div>
    <div class="dock-group d-flex">
      <button class="tool" aria-label="Draft analysis"><svg class="ico"><use href="#b-draft"/></svg></button>
      <button class="tool" aria-label="Curvature analysis"><svg class="ico"><use href="#b-curv"/></svg></button>
      <button class="tool" aria-label="Tap analysis"><svg class="ico halo"><use href="#b-tap"/></svg></button>
      <button class="tool" aria-label="Sectioning"><svg class="ico"><use href="#b-sect"/></svg></button>
    </div>
    <div class="dock-group d-flex"><button class="tool" aria-label="Wall"><svg class="ico"><use href="#b-chan"/></svg></button></div>
    <div class="dock-group d-flex">
      <button class="tool more" aria-label="Material"><svg class="ico"><use href="#b-cata"/></svg></button>
      <button class="tool more" aria-label="Catalog browser"><svg class="ico"><use href="#b-paste"/></svg></button>
    </div>
  </section>

  <footer class="statusline d-flex align-items-center">
    <label for="power" class="me-auto">Select an object or a command</label>
    <input id="power" class="powerin" type="text">
    <button class="tool" aria-label="Dialog"><svg width="12" height="12" shape-rendering="crispEdges"><path d="M2 2H8V7H2ZM8 8L11 11" fill="none" stroke="#6a7cb8" stroke-width="2"/></svg></button>
  </footer>
</main>

<footer class="taskbar d-flex align-items-center">
  <button class="tool" aria-label="Start"><svg width="16" height="16"><path d="M0 2.500L7 1.500V7.500H0ZM8 1.300L16 0V7.500H8ZM0 8.500H7V14.500L0 13.500ZM8 8.500H16V16L8 14.700Z" fill="#fff"/></svg></button>
  <div class="findbox d-flex align-items-center">
    <svg width="18" height="18"><circle cx="11" cy="7" r="5" fill="none" stroke="#fff" stroke-width="1.300"/><path d="M7.500 10.500L2 16" stroke="#fff" stroke-width="1.300"/></svg>
    <input type="text" class="ms-2 ps-1" placeholder="Type here to search" aria-label="Type here to search">
  </div>
  <button class="tool" aria-label="Cortana"><svg width="16" height="16"><circle cx="8" cy="8" r="6.500" fill="none" stroke="#fff" stroke-width="2"/></svg></button>
  <button class="tool" aria-label="Task View"><svg width="18" height="16"><path d="M1.500 0V3.500H11.500V0M1.500 6.500H11.500V11.500H1.500ZM1.500 16V13.500H11.500V16M15.500 0V3M15.500 9V16" fill="none" stroke="#fff" stroke-width="1.200"/><rect x="14" y="5" width="3" height="3" fill="#fff"/></svg></button>
  <button class="tool" aria-label="Edge"><svg width="22" height="22"><path d="M1 10C2 3 6 0 12 0C18 0 21 5 21 10V13H8C8 17 15 19 20 16V20C13 24 3 22 4 14C4 10 7 7 10 6C8 7 8 9 8 9H14C14 3 5 3 1 10Z" fill="#0b7bd8"/></svg></button>
  <button class="tool" aria-label="File Explorer"><svg width="22" height="18"><path d="M0 0H8L10 2H22V18H0Z" fill="#e8a818"/><path d="M0 4H22V17H0Z" fill="#ffd966"/><path d="M5 10H17V18H14V14H8V18H5Z" fill="#3e9ad8"/></svg></button>
  <button class="tool" aria-label="Store"><svg width="22" height="24"><path d="M7 6V1.500H15V6" fill="none" stroke="#fff" stroke-width="1.500"/><path d="M0 6H22V23H0Z" fill="#f3f3f3"/><path d="M7 10h4v4H7Z" fill="#f35325"/><path d="M12 10h4v4h-4Z" fill="#81bc06"/><path d="M7 15h4v4H7Z" fill="#05a6f0"/><path d="M12 15h4v4h-4Z" fill="#ffba08"/></svg></button>
  <button class="tool open active" aria-label="CATIA"><svg width="24" height="24"><use href="#logo"/><rect x=".5" y=".5" width="23" height="23" fill="none" stroke="#fff"/></svg></button>
  <button class="tool open" aria-label="Chrome"><svg width="22" height="22" viewBox="0 0 22 22"><circle cx="11" cy="11" r="11" fill="#34a853"/><path d="M11 11L1.500 5.500A11 11 0 0 1 20.500 5.500Z" fill="#ea4335"/><path d="M11 6H21A11 11 0 0 1 10 22L15.500 13Z" fill="#fbc116"/><circle cx="11" cy="11" r="5.200" fill="#fff"/><circle cx="11" cy="11" r="4" fill="#4285f4"/></svg></button>
  <button class="tool open" aria-label="Control Panel"><svg width="21" height="15"><rect width="21" height="15" rx="1" fill="#58bdf0"/><rect x="1" y="1" width="19" height="13" fill="#8ad8fb"/><circle cx="6" cy="6" r="3.500" fill="#1777c8"/><path d="M6 6V2.500A3.500 3.500 0 0 1 9.500 6Z" fill="#ffb640"/><path d="M13 3H18M13 5.500H18M13 8H18M11 12H17" stroke="#1777c8" stroke-width="1.500"/><path d="M3 12H8" stroke="#ff9c30" stroke-width="1.500"/></svg></button>

  <div class="tray d-flex align-items-center">
    <button class="tool" aria-label="Show hidden icons"><svg width="12" height="8"><path d="M1 7L6 1.500L11 7" fill="none" stroke="#fff" stroke-width="1.300"/></svg></button>
    <button class="tool" aria-label="Download manager"><svg width="16" height="16"><circle cx="10" cy="6" r="6" fill="#3f8fd8"/><circle cx="10" cy="4" r="2" fill="#a8d4f4"/><path d="M5 1C3 5 5 9 11 10L9 13C3 12 1 6 5 1Z" fill="#e0d020"/><path d="M3 4C2 9 5 12 9 13L7 15C1 13 0 8 3 4Z" fill="#c83820"/><path d="M6 9L15 10L7 16Z" fill="#20a030"/></svg></button>
    <button class="tool" aria-label="Weather"><svg width="15" height="15"><circle cx="7.500" cy="7.500" r="7" fill="#f4c487"/><path d="M1 8C7 4 9 10 13 12A7 7 0 0 1 1 8Z" fill="#7a9ad0"/></svg></button>
    <button class="tool" aria-label="NVIDIA"><svg width="16" height="16"><rect width="16" height="16" fill="#1b1b1b"/><path d="M7 4H13V12H7Z" fill="#76b900"/><path d="M2 8C4 4 10 4 11 8C10 11 4 11 2 8Z" fill="#1b1b1b" stroke="#76b900"/><circle cx="7" cy="8" r="1.500" fill="#76b900"/></svg></button>
    <button class="tool" aria-label="Security"><svg width="12" height="15"><path d="M6 0L12 2V8Q12 13 6 15Q0 13 0 8V2Z" fill="#13a085"/><path d="M3 7L5.500 9.500L9.500 5" fill="none" stroke="#fff" stroke-width="1.500"/></svg></button>
    <button class="tool" aria-label="Network"><svg width="17" height="15"><path d="M4.500 2.500H16.500V11.500H4.500ZM7 14.500H14M10.500 11.500V14.500M.5 1.500H4.500V5.500H.5ZM2.500 5.500V11" fill="none" stroke="#fff"/></svg></button>
    <button class="tool" aria-label="Volume"><svg width="17" height="14"><path d="M.5 4.500H3L6.500 1V13L3 9.500H.5Z" fill="none" stroke="#fff"/><path d="M9 4.500Q11 7 9 9.500M11.500 2.500Q14.500 7 11.500 11.500" fill="none" stroke="#fff"/><path d="M14 1Q18 7 14 13" fill="none" stroke="#999"/></svg></button>
    <span class="lang">ENG</span>
    <div class="clock me-3">03:47 PM<br>04-09-2020</div>
    <button class="tool notes" aria-label="Notifications"><svg width="26" height="26"><path d="M0 3H16V15H7L4 18V15H0Z" fill="#fff"/><path d="M3 6.500H13M3 9.500H13M3 12.500H10" stroke="#444548"/><circle cx="16" cy="17" r="7.500" fill="#3c3c3e" stroke="#888"/><text x="13" y="21" font-family="Open Sans, sans-serif" font-size="11" font-weight="600" fill="#fff">2</text></svg></button>
    <div class="deskpeek align-self-stretch"></div>
  </div>
</footer>

<script>
  // Ground grid in perspective: row n has column spacing step(n) and height rowY(n).
  const floor = document.getElementById('floor');
  const step = n => 1 / (0.0054526 + 0.00019409 * n);
  const rowY = n => -956.2 + step(n) / 0.10793;
  const near = -8, far = 24;
  const addLine = (x1, y1, x2, y2) => {
    const l = document.createElementNS('http://www.w3.org/2000/svg', 'line');
    l.setAttribute('x1', x1); l.setAttribute('y1', y1); l.setAttribute('x2', x2); l.setAttribute('y2', y2);
    floor.appendChild(l);
  };
  for (let j = -22; j <= 22; j++) {
    for (const dir of [-0.5, 0.5]) {
      addLine(960 + (j + dir * near) * step(near), rowY(near), 960 + (j + dir * far) * step(far), rowY(far));
    }
  }
</script>
</body>
</html>
